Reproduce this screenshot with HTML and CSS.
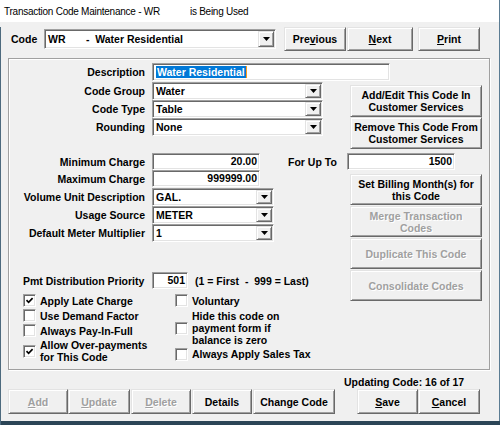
FILE: index.html
```html
<!DOCTYPE html>
<html>
<head>
<meta charset="utf-8">
<title>Transaction Code Maintenance</title>
<link rel="stylesheet" href="styles.css">
</head>
<body>
<div class="window">
  <div class="titlebar"><span>Transaction Code Maintenance - WR</span><span class="title-gap">is Being Used</span></div>
  <div class="client">
    <div class="top-row">
      <div class="code-label">Code</div>
      <div class="field combo w232 h20"><span class="val">WR       -  Water Residential</span><span class="drop"><svg width="7" height="4" viewBox="0 0 7 4"><path d="M0 0H7L3.5 4Z" fill="#000"/></svg></span></div>
      <div class="btn top-btn w62 ml8">Pre<u>v</u>ious</div>
      <div class="btn top-btn w66 ml1"><u>N</u>ext</div>
      <div class="btn top-btn w62 ml5"><u>P</u>rint</div>
    </div>

    <div class="group">
      <div class="row h18">
        <div class="lbl">Description</div>
        <div class="field w238 h18"><span class="val"><span class="sel">Water Residential</span><span class="caret"></span></span></div>
      </div>

      <div class="sec sec1">
        <div class="col-left">
          <div class="row h18">
            <div class="lbl">Code Group</div>
            <div class="field combo w171 h18"><span class="val">Water</span><span class="drop"><svg width="7" height="4" viewBox="0 0 7 4"><path d="M0 0H7L3.5 4Z" fill="#000"/></svg></span></div>
          </div>
          <div class="row h18">
            <div class="lbl">Code Type</div>
            <div class="field combo w171 h18"><span class="val">Table</span><span class="drop"><svg width="7" height="4" viewBox="0 0 7 4"><path d="M0 0H7L3.5 4Z" fill="#000"/></svg></span></div>
          </div>
          <div class="row h18">
            <div class="lbl">Rounding</div>
            <div class="field combo w171 h18"><span class="val">None</span><span class="drop"><svg width="7" height="4" viewBox="0 0 7 4"><path d="M0 0H7L3.5 4Z" fill="#000"/></svg></span></div>
          </div>
        </div>
        <div class="col-right col-right-1">
          <div class="btn side-btn">Add/Edit This Code In<br>Customer Services</div>
          <div class="btn side-btn">Remove This Code From<br>Customer Services</div>
        </div>
      </div>

      <div class="row h17 min-row">
        <div class="lbl">Minimum Charge</div>
        <div class="field num w108 h17"><span class="val">20.00</span></div>
        <div class="forup">For Up To</div>
        <div class="field num w108 h17"><span class="val">1500</span></div>
      </div>

      <div class="sec">
        <div class="col-left">
          <div class="row h17">
            <div class="lbl">Maximum Charge</div>
            <div class="field num w108 h17"><span class="val">999999.00</span></div>
          </div>
          <div class="row h18 mt1">
            <div class="lbl">Volume Unit Description</div>
            <div class="field combo w122 h18"><span class="val">GAL.</span><span class="drop"><svg width="7" height="4" viewBox="0 0 7 4"><path d="M0 0H7L3.5 4Z" fill="#000"/></svg></span></div>
          </div>
          <div class="row h18">
            <div class="lbl">Usage Source</div>
            <div class="field combo w122 h18"><span class="val">METER</span><span class="drop"><svg width="7" height="4" viewBox="0 0 7 4"><path d="M0 0H7L3.5 4Z" fill="#000"/></svg></span></div>
          </div>
          <div class="row h18">
            <div class="lbl">Default Meter Multiplier</div>
            <div class="field combo w122 h18"><span class="val">1</span><span class="drop"><svg width="7" height="4" viewBox="0 0 7 4"><path d="M0 0H7L3.5 4Z" fill="#000"/></svg></span></div>
          </div>

          <div class="row h17 pmt-row">
            <div class="pmt-lbl">Pmt Distribution Priority</div>
            <div class="field num w36 h17"><span class="val">501</span></div>
            <div class="pmt-note">(1 = First&nbsp;&nbsp;-&nbsp;&nbsp;999 = Last)</div>
          </div>

          <div class="checks">
            <div class="ccol ccol1">
              <div class="chk"><span class="box"><svg width="9" height="9" viewBox="0 0 9 9"><path d="M1.5 4.2L3.6 6.3L7.6 2.2" fill="none" stroke="#000" stroke-width="1.7"/></svg></span><span>Apply Late Charge</span></div>
              <div class="chk"><span class="box"></span><span>Use Demand Factor</span></div>
              <div class="chk"><span class="box"></span><span>Always Pay-In-Full</span></div>
              <div class="chk multi allow"><span class="box"><svg width="9" height="9" viewBox="0 0 9 9"><path d="M1.5 4.2L3.6 6.3L7.6 2.2" fill="none" stroke="#000" stroke-width="1.7"/></svg></span><span>Allow Over-payments<br>for This Code</span></div>
            </div>
            <div class="ccol ccol2">
              <div class="chk"><span class="box"></span><span>Voluntary</span></div>
              <div class="chk multi hide"><span class="box"></span><span>Hide this code on<br>payment form if<br>balance is zero</span></div>
              <div class="chk tax"><span class="box"></span><span>Always Apply Sales Tax</span></div>
            </div>
          </div>
        </div>
        <div class="col-right col-right-2">
          <div class="btn side-btn2">Set Billing Month(s) for<br>this Code</div>
          <div class="btn side-btn2 dis">Merge Transaction<br>Codes</div>
          <div class="btn side-btn2 dis">Duplicate This Code</div>
          <div class="btn side-btn2 dis">Consolidate Codes</div>
        </div>
      </div>
    </div>

    <div class="status">Updating Code: 16 of 17</div>

    <div class="bottom-row">
      <div class="btn dis w60"><u>A</u>dd</div>
      <div class="btn dis w62"><u>U</u>pdate</div>
      <div class="btn dis w60 ml1"><u>D</u>elete</div>
      <div class="btn w60 ml1">Details</div>
      <div class="btn w82 ml1">Change Code</div>
      <div class="btn w61 ml22"><u>S</u>ave</div>
      <div class="btn w62"><u>C</u>ancel</div>
    </div>
  </div>
</div>
</body>
</html>
```

FILE: styles.css
```css
* { box-sizing: border-box; }
html, body { margin: 0; padding: 0; }
body {
  width: 500px;
  height: 425px;
  overflow: hidden;
  background: #2b4556;
  font-family: "Liberation Sans", Arial, sans-serif;
  font-size: 10.5px;
  font-weight: bold;
  color: #000;
}
.window {
  width: 500px;
  height: 421px;
  background: #f0f0f0;
  border-right: 1px solid #5b7c93;
}
.titlebar {
  height: 22px;
  background: #fff;
  font-weight: normal;
  font-size: 10px;
  letter-spacing: -0.25px;
  padding: 1px 0 0 4px;
  line-height: 21px;
  white-space: nowrap;
}
.title-gap { margin-left: 30px; }
.client {
  height: 399px;
  box-shadow: inset 1px 0 #4d6a7e;
}
.top-row {
  display: flex;
  align-items: center;
  height: 24px;
  margin-top: 5px;
}
.code-label { width: 44px; padding-left: 11px; flex: none; }

.field {
  flex: none;
  display: flex;
  align-items: center;
  background: #fff;
  border: 1px solid;
  border-color: #a0a0a0 #fff #fff #a0a0a0;
  box-shadow: inset 1px 1px #696969, inset -1px -1px #e3e3e3;
  padding: 1px;
}
.val {
  flex: 1;
  padding: 0 2px;
  white-space: pre;
  overflow: hidden;
  line-height: 13px;
}
.num .val { text-align: right; padding-right: 1px; }
.sel {
  background: #0078d7;
  color: #fff;
  padding: 0 1px;
  display: inline-block;
  line-height: 12px;
}
.caret {
  display: inline-block;
  width: 1px;
  height: 12px;
  background: #ff9a1a;
  vertical-align: top;
}
.drop {
  width: 16px;
  flex: none;
  align-self: stretch;
  display: flex;
  align-items: center;
  justify-content: center;
  background: #f0f0f0;
  border: 1px solid;
  border-color: #e3e3e3 #696969 #696969 #e3e3e3;
  box-shadow: inset 1px 1px #fff, inset -1px -1px #a0a0a0;
}
.drop svg { display: block; }

.btn {
  flex: none;
  display: flex;
  align-items: center;
  justify-content: center;
  text-align: center;
  background: #f0f0f0;
  border: 1px solid;
  border-color: #e3e3e3 #696969 #696969 #e3e3e3;
  box-shadow: inset 1px 1px #fff, inset -1px -1px #a0a0a0;
  line-height: 12px;
  white-space: nowrap;
}
.btn.dis { color: #a0a0a0; text-shadow: 1px 1px #fff; }
.top-btn { height: 24px; }

.w36 { width: 36px; }
.w60 { width: 60px; }
.w61 { width: 61px; }
.w62 { width: 62px; }
.w66 { width: 66px; }
.w82 { width: 82px; }
.w108 { width: 108px; }
.w122 { width: 122px; }
.w171 { width: 171px; }
.w232 { width: 232px; }
.w238 { width: 238px; }
.h17 { height: 17px; }
.h18 { height: 18px; }
.h20 { height: 20px; }
.ml1 { margin-left: 1px; }
.ml5 { margin-left: 5px; }
.ml8 { margin-left: 8px; }
.ml22 { margin-left: 22px; }
.mt1 { margin-top: 1px; }

.group {
  margin: 7px 0 0 8px;
  width: 482px;
  height: 312px;
  border: 1px solid #a0a0a0;
  box-shadow: inset 1px 1px #fff, 1px 1px #fff;
  padding-top: 4px;
}
.row { display: flex; align-items: center; }
.lbl {
  width: 136px;
  margin-right: 7px;
  text-align: right;
  white-space: nowrap;
  flex: none;
}
.sec { display: flex; }
.sec1 { margin-top: 1px; }
.col-left { width: 341px; flex: none; }
.col-right { width: 132px; display: flex; flex-direction: column; flex: none; }
.col-right-1 { margin-top: 3px; }
.side-btn { height: 32px; }
.col-right-2 { margin-top: 4px; gap: 1px; }
.side-btn2 { height: 31px; }

.min-row { margin-top: 4px; }
.forup { margin-left: 28px; width: 59px; flex: none; white-space: nowrap; }

.pmt-row { margin-top: 30px; padding-left: 14px; }
.pmt-lbl { width: 129px; flex: none; white-space: nowrap; }
.pmt-note { margin-left: 7px; white-space: nowrap; }

.checks { display: flex; padding-left: 14px; margin-top: 4px; }
.ccol1 { width: 152px; flex: none; }
.chk {
  display: flex;
  align-items: center;
  gap: 4px;
  height: 15px;
  white-space: nowrap;
}
.chk.multi { height: auto; line-height: 12px; }
.chk.allow { margin-top: 1px; }
.chk.hide { margin-top: 2px; }
.chk.tax { margin-top: 1px; height: 14px; }
.box {
  width: 13px;
  height: 13px;
  flex: none;
  background: #fff;
  border: 1px solid;
  border-color: #a0a0a0 #fff #fff #a0a0a0;
  box-shadow: inset 1px 1px #696969, inset -1px -1px #e3e3e3;
  display: flex;
  align-items: center;
  justify-content: center;
}
.box svg { display: block; }

.status {
  margin: 5px 0 0 344px;
  height: 14px;
  line-height: 14px;
  white-space: nowrap;
}
.bottom-row {
  display: flex;
  margin-left: 8px;
  height: 25px;
}
```
